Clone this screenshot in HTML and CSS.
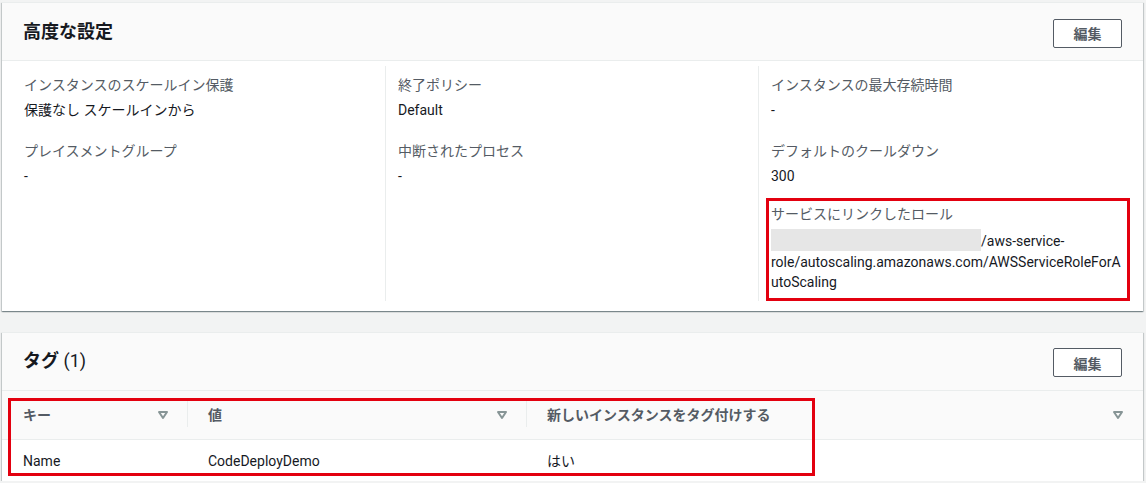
FILE: index.html
```html
<!DOCTYPE html>
<html lang="ja">
<head>
<meta charset="utf-8">
<title>高度な設定</title>
<link rel="stylesheet" href="styles.css">
</head>
<body>
<div class="page">
  <section class="card">
    <div class="card-header">
      <h2 class="title">高度な設定</h2>
      <button class="btn">編集</button>
    </div>
    <div class="card-body">
      <div class="col">
        <div class="item">
          <div class="label">インスタンスのスケールイン保護</div>
          <div class="value">保護なし スケールインから</div>
        </div>
        <div class="item">
          <div class="label">プレイスメントグループ</div>
          <div class="value">-</div>
        </div>
      </div>
      <div class="col col-div">
        <div class="item">
          <div class="label">終了ポリシー</div>
          <div class="value">Default</div>
        </div>
        <div class="item">
          <div class="label">中断されたプロセス</div>
          <div class="value">-</div>
        </div>
      </div>
      <div class="col col-div">
        <div class="item">
          <div class="label">インスタンスの最大存続時間</div>
          <div class="value">-</div>
        </div>
        <div class="item">
          <div class="label">デフォルトのクールダウン</div>
          <div class="value">300</div>
        </div>
        <div class="item item-marked">
          <div class="label">サービスにリンクしたロール</div>
          <div class="value role">
            <span class="line"><span class="redacted"></span>/aws-service-</span>
            <span class="line">role/autoscaling.amazonaws.com/AWSServiceRoleForA</span>
            <span class="line">utoScaling</span>
          </div>
          <div class="mark mark-role"></div>
        </div>
      </div>
    </div>
  </section>

  <section class="card card-tags">
    <div class="card-header">
      <h2 class="title">タグ <span class="count">(1)</span></h2>
      <button class="btn">編集</button>
    </div>
    <div class="table">
      <div class="row head">
        <div class="cell c1"><span>キー</span><svg class="sort" viewBox="0 0 12 10" width="12" height="10"><polygon points="2,2 10,2 6,8" fill="none" stroke="#879596" stroke-width="2" stroke-linejoin="round"/></svg><i class="sep"></i></div>
        <div class="cell c2"><span>値</span><svg class="sort" viewBox="0 0 12 10" width="12" height="10"><polygon points="2,2 10,2 6,8" fill="none" stroke="#879596" stroke-width="2" stroke-linejoin="round"/></svg><i class="sep"></i></div>
        <div class="cell c3"><span>新しいインスタンスをタグ付けする</span><svg class="sort" viewBox="0 0 12 10" width="12" height="10"><polygon points="2,2 10,2 6,8" fill="none" stroke="#879596" stroke-width="2" stroke-linejoin="round"/></svg></div>
      </div>
      <div class="row body-row">
        <div class="cell c1">Name</div>
        <div class="cell c2">CodeDeployDemo</div>
        <div class="cell c3">はい</div>
      </div>
      <div class="mark mark-table"></div>
    </div>
  </section>
</div>
</body>
</html>
```

FILE: styles.css
```css
html, body {
  margin: 0;
  padding: 0;
  background: #f2f3f3;
}
body {
  font-family: Roboto, "Noto Sans CJK JP", sans-serif;
  font-size: 14px;
  line-height: 20px;
  color: #16191f;
}
.page {
  padding: 2px 3px 0 2px;
  display: flex;
  flex-direction: column;
  gap: 21px;
}
.card {
  background: #fff;
  border-top: 1px solid #eaeded;
  box-shadow: 0 1px 1px 0 rgba(0, 28, 36, 0.3), 1px 1px 1px 0 rgba(0, 28, 36, 0.15), -1px 1px 1px 0 rgba(0, 28, 36, 0.15);
}
.card-header {
  height: 57px;
  background: #fafafa;
  border-bottom: 1px solid #eaeded;
  display: flex;
  align-items: center;
  justify-content: space-between;
  padding: 0 21px 0 21px;
}
.title {
  margin: 0;
  font-size: 18px;
  line-height: 24px;
  font-weight: 700;
  color: #16191f;
}
.count {
  font-weight: 400;
  color: #16191f;
}
.btn {
  width: 69px;
  height: 29px;
  margin-top: 3px;
  background: #fff;
  border: 1px solid #545b64;
  border-radius: 2px;
  font-family: Roboto, "Noto Sans CJK JP", sans-serif;
  font-size: 14px;
  font-weight: 700;
  color: #545b64;
  padding: 0;
}
.card-body {
  display: grid;
  grid-template-columns: 373px 373px 1fr;
  padding: 5px 12px 10px 10px;
}
.col {
  padding: 9px 12px 0 12px;
  display: flex;
  flex-direction: column;
  gap: 21px;
}
.col-div {
  border-left: 1px solid #eaeded;
}
.item {
  display: flex;
  flex-direction: column;
  gap: 5px;
}
.label {
  color: #545b64;
}
.value {
  color: #16191f;
}
.item-marked {
  position: relative;
  margin-top: -3px;
  padding-bottom: 8px;
}
.role {
  display: flex;
  flex-direction: column;
  line-height: 20.5px;
}
.line {
  display: block;
  white-space: nowrap;
}
.redacted {
  display: inline-block;
  width: 210px;
  height: 22px;
  background: #e6e6e6;
  vertical-align: -5px;
}
.mark {
  position: absolute;
  border: 3px solid #e3000f;
  pointer-events: none;
}
.mark-role {
  left: -5px;
  top: -6px;
  width: 358px;
  height: 97px;
}
.table {
  position: relative;
}
.row {
  display: grid;
  grid-template-columns: 186px 339px 1fr;
}
.head {
  height: 48px;
  background: #fafafa;
  border-bottom: 1px solid #eaeded;
  font-weight: 700;
  color: #545b64;
}
.body-row {
  height: 41px;
}
.cell {
  position: relative;
  display: flex;
  align-items: center;
  justify-content: space-between;
  padding: 0 20px 0 20px;
}
.c1 {
  padding-left: 21px;
}
.body-row .cell {
  padding-top: 1px;
}
.sort {
  display: block;
  margin-right: -1px;
}
.sep {
  position: absolute;
  right: 0;
  top: 10px;
  width: 1px;
  height: 26px;
  background: #eaeded;
}
.mark-table {
  left: 6px;
  top: 7px;
  width: 801px;
  height: 72px;
}
```
